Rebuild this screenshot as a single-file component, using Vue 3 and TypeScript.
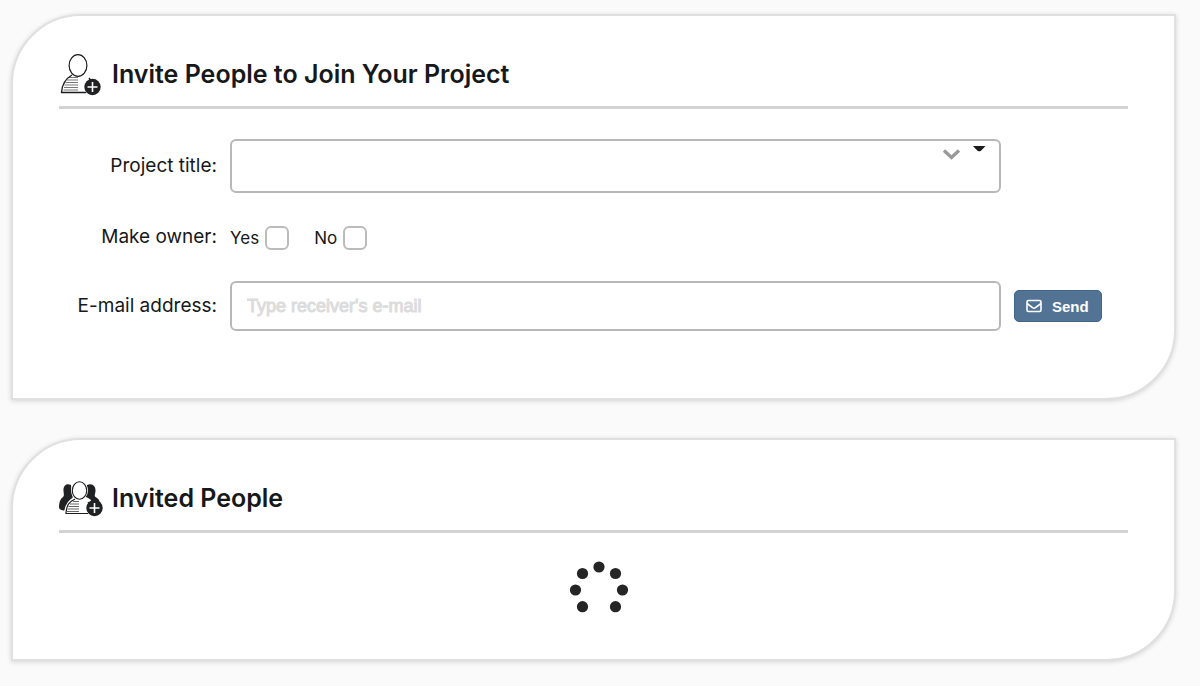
<script setup lang="ts">
import { ref } from 'vue'

const project = ref<string>('')
const ownerYes = ref<boolean>(false)
const ownerNo = ref<boolean>(false)
const email = ref<string>('')

interface Dot {
  x: number
  y: number
}

const dots: Dot[] = [
  { x: 30, y: 7 },
  { x: 46.5, y: 13.5 },
  { x: 53.5, y: 30 },
  { x: 46.5, y: 46.7 },
  { x: 13.5, y: 46.7 },
  { x: 6.5, y: 30 },
  { x: 13.5, y: 13.5 },
]
</script>

<template>
  <main class="page">
    <section class="card">
      <header class="card-head">
        <svg class="head-icon" viewBox="0 0 44 44" aria-hidden="true">
          <g stroke="#777" stroke-width="1">
            <path d="M10 24.500H19M8 27H19M6.500 29.500H19M5.500 32H19M5 34.500H19M4.500 37H19" />
          </g>
          <path d="M13 22C6 26 3 31 2.500 39.500H27M30 25L31.500 27" fill="none" stroke="#1c1c1c" stroke-width="1.300" />
          <ellipse cx="19" cy="12.500" rx="8.900" ry="10.800" fill="#fff" stroke="#1c1c1c" stroke-width="1.200" />
          <circle cx="33.500" cy="34" r="8.200" fill="#1f2122" />
          <path d="M28.500 34H38.500M33.500 29V39" stroke="#fff" stroke-width="1.600" />
        </svg>
        <h1>Invite People to Join Your Project</h1>
      </header>
      <form class="form" @submit.prevent>
        <label class="label" for="project">Project title:</label>
        <div class="select-wrap">
          <select id="project" v-model="project" class="field select">
            <option value=""></option>
          </select>
          <svg class="arrows" viewBox="0 0 44 16" aria-hidden="true">
            <path d="M2 4.500L9.500 11.500L17 4.500" fill="none" stroke="#999" stroke-width="3.400" />
            <path d="M31 0H43.500L39 4.700Q37.200 6 35.500 4.700Z" fill="#1c1c1c" />
          </svg>
        </div>

        <span id="owner-label" class="label owner-label">Make owner:</span>
        <div class="choices" role="group" aria-labelledby="owner-label">
          <label class="choice">Yes <input v-model="ownerYes" type="checkbox" /></label>
          <label class="choice">No <input v-model="ownerNo" type="checkbox" /></label>
        </div>

        <label class="label" for="email">E-mail address:</label>
        <input id="email" v-model="email" class="field email" type="email" placeholder="Type receiver's e-mail" />
        <button class="send" type="submit">
          <svg viewBox="0 0 16 14" aria-hidden="true">
            <rect x="1" y="1.500" width="14" height="11" rx="1.500" />
            <path d="M1 4.500L6.500 8.700Q8 9.700 9.500 8.700L15 4.500" />
          </svg>
          Send
        </button>
      </form>
    </section>

    <section class="card">
      <header class="card-head">
        <svg class="head-icon" viewBox="0 0 44 44" aria-hidden="true">
          <path d="M12 8C7 5.500 4 9 4.500 14C4.700 17 5.500 18.500 4 20C1 22 0 26 0 30C0 33 3 33.500 7 33.500L14 23Z" fill="#1f2122" />
          <path d="M28 8C33 5.500 37 9 36.500 14C36.300 17 35 19 36.500 20C40 22 41 24 41 28L35 32H29L26 23Z" fill="#1f2122" />
          <path d="M16 21C10 24 7 28 6.500 36.500H31L33 28C32 24 29 22 25 21Z" fill="#fff" stroke="#fff" stroke-width="3" />
          <path d="M16 22C10 25 7.500 28 7 36.500H29M29 25L30.500 27" fill="none" stroke="#1c1c1c" stroke-width="1.200" />
          <path d="M14 24.500H20M11 27H20M9.500 29.500H20M8.500 32H20M8 34.500H20" stroke="#666" stroke-width="1" />
          <ellipse cx="20.500" cy="13.500" rx="8.500" ry="10" fill="#fff" />
          <ellipse cx="20.500" cy="13.500" rx="7.200" ry="8.800" fill="#fff" stroke="#1c1c1c" stroke-width="1.100" />
          <circle cx="35.500" cy="31" r="8.200" fill="#1f2122" />
          <path d="M30.500 31H40.500M35.500 26V36" stroke="#fff" stroke-width="1.600" />
        </svg>
        <h2>Invited People</h2>
      </header>
      <div class="loading" role="status" aria-label="Loading">
        <svg viewBox="0 0 60 60" aria-hidden="true">
          <circle v-for="(dot, i) in dots" :key="i" :cx="dot.x" :cy="dot.y" r="5.600" fill="#252525" />
        </svg>
      </div>
    </section>
  </main>
</template>

<style>
body {
  background: #fafafa;
}
</style>

<style scoped>
.page {
  display: flex;
  flex-direction: column;
  gap: 38px;
  padding: 14px 24px 26px 11px;
  font-family: Inter, "Liberation Sans", sans-serif;
  color: #161819;
}

.card {
  padding: 30px 46px 67px;
  background: #fff;
  border: 2px solid #e0e0e0;
  border-radius: 70px 0;
  box-shadow: 0 1px 5px rgba(0, 0, 0, 0.16);
}

.card + .card {
  padding-bottom: 39px;
}

.card-head {
  display: flex;
  align-items: center;
  gap: 9px;
  height: 60px;
  border-bottom: 3px solid #d3d3d3;
}

.head-icon {
  width: 44px;
  height: 44px;
  margin-top: -2px;
}

h1,
h2 {
  margin: 0;
  padding-bottom: 4px;
  font-size: 25px;
  font-weight: 600;
  line-height: 32px;
}

.form {
  display: grid;
  grid-template-columns: 158px 1fr 114px;
  column-gap: 13px;
  margin-top: 30px;
}

.label {
  justify-self: end;
  align-self: center;
  font-size: 19px;
  line-height: 26px;
}

.select-wrap {
  position: relative;
}

.field {
  display: block;
  box-sizing: border-box;
  width: 100%;
  border: 2px solid #b8b8b8;
  border-radius: 6px;
  background: #fff;
  color: #222;
  font: 18px "Liberation Sans", Arial, sans-serif;
}

.select {
  height: 54px;
  padding: 0 68px 0 15px;
  appearance: none;
}

.arrows {
  position: absolute;
  top: 7px;
  right: 15px;
  width: 44px;
  height: 16px;
  pointer-events: none;
}

.owner-label {
  grid-column: 1;
}

.choices {
  display: flex;
  gap: 25px;
  align-items: center;
  box-sizing: border-box;
  grid-column: 2 / 4;
  height: 88px;
  padding-top: 2px;
}

.choice {
  display: flex;
  gap: 6px;
  align-items: center;
  font-size: 17px;
  line-height: 24px;
}

.choice input {
  appearance: none;
  width: 24px;
  height: 24px;
  margin: 0;
  border: 2px solid #bbb;
  border-radius: 6px;
  background: #fff;
}

.choice input:checked {
  background: #527394;
}

.email {
  height: 50px;
  padding: 0 15px;
}

.email::placeholder {
  color: #dcdcdc;
  opacity: 1;
  -webkit-text-stroke: 1px #dcdcdc;
}

.send {
  display: flex;
  gap: 10px;
  align-items: center;
  align-self: center;
  justify-self: start;
  height: 32px;
  padding: 0 12px 0 11px;
  border: 1px solid #3f658b;
  border-radius: 5px;
  background: #527394;
  color: #fff;
  font: bold 15px "Liberation Sans", Arial, sans-serif;
}

.send svg {
  width: 16px;
  height: 14px;
  fill: none;
  stroke: #fff;
  stroke-width: 1.6;
}

.loading {
  display: flex;
  justify-content: center;
  padding-top: 27px;
}

.loading svg {
  width: 60px;
  height: 60px;
  margin-right: -10px;
}
</style>
